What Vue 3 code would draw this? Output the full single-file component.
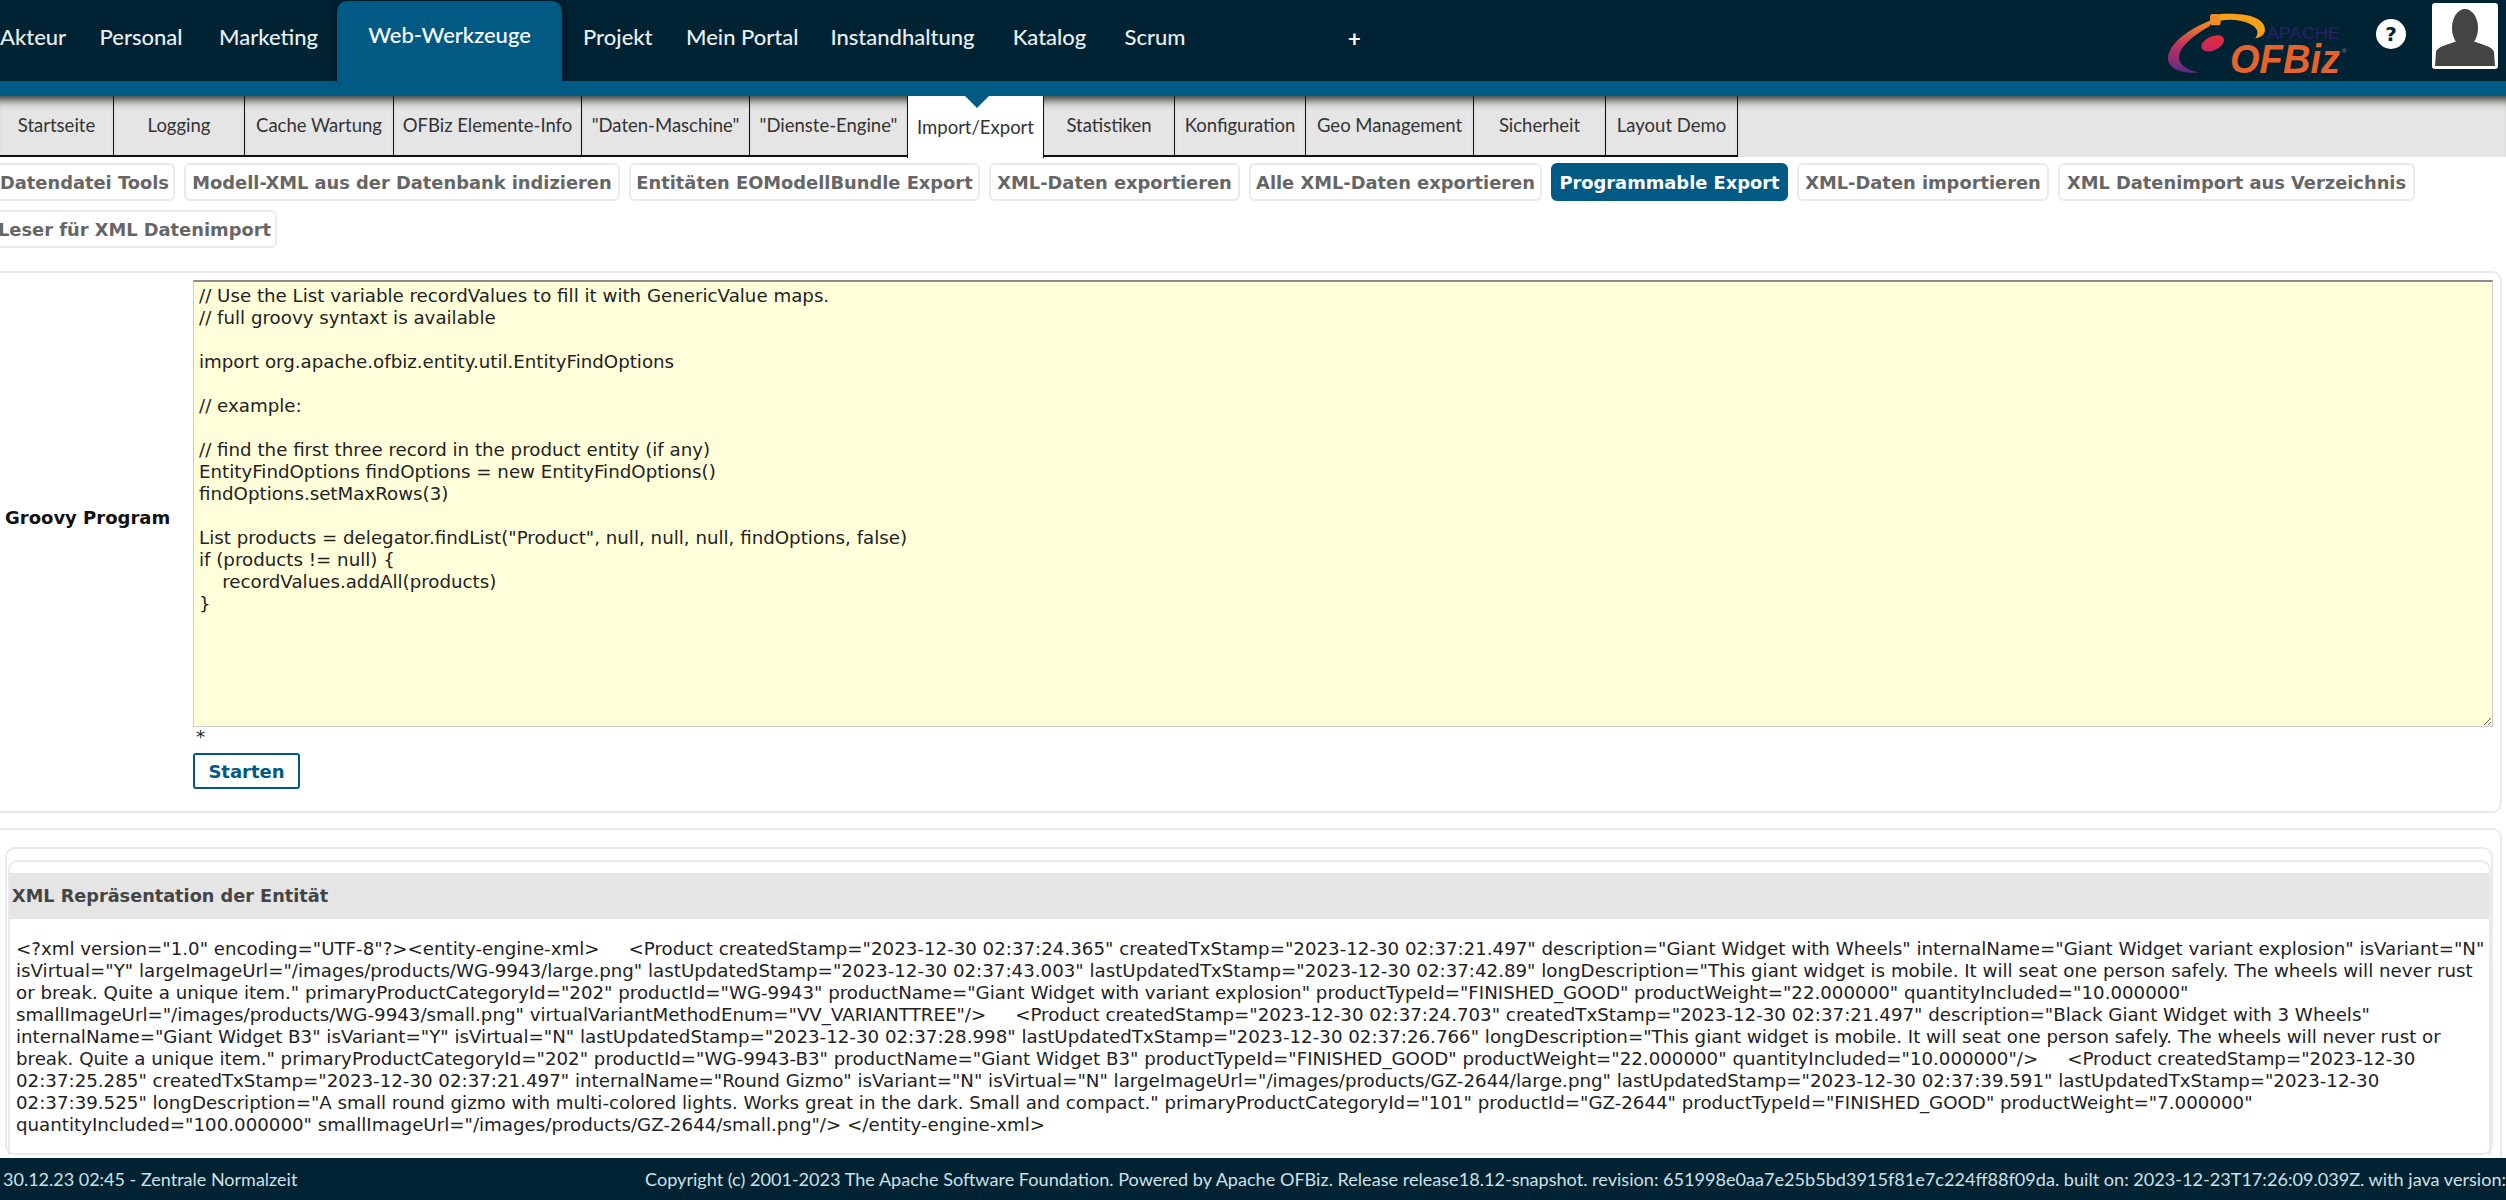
<script setup>
import { ref } from 'vue'

// top menu, widths measured off the screenshot
const menu = [
  { label: 'Akteur', w: 63 },
  { label: 'Personal', w: 84 },
  { label: 'Marketing', w: 97 },
  { label: 'Web-Werkzeuge', w: 225, active: true },
  { label: 'Projekt', w: 67 },
  { label: 'Mein Portal', w: 108 },
  { label: 'Instandhaltung', w: 145 },
  { label: 'Katalog', w: 77 },
  { label: 'Scrum', w: 62 }
]

const tabs = [
  { label: 'Startseite', w: 114 },
  { label: 'Logging', w: 131 },
  { label: 'Cache Wartung', w: 149 },
  { label: 'OFBiz Elemente-Info', w: 188 },
  { label: '"Daten-Maschine"', w: 168 },
  { label: '"Dienste-Engine"', w: 158 },
  { label: 'Import/Export', w: 137, active: true },
  { label: 'Statistiken', w: 131 },
  { label: 'Konfiguration', w: 131 },
  { label: 'Geo Management', w: 168 },
  { label: 'Sicherheit', w: 132 },
  { label: 'Layout Demo', w: 132 }
]

const buttons = [
  { label: 'Datendatei Tools', w: 185 },
  { label: 'Modell-XML aus der Datenbank indizieren', w: 436 },
  { label: 'Entitäten EOModellBundle Export', w: 351 },
  { label: 'XML-Daten exportieren', w: 251 },
  { label: 'Alle XML-Daten exportieren', w: 293 },
  { label: 'Programmable Export', w: 237, active: true },
  { label: 'XML-Daten importieren', w: 252 },
  { label: 'XML Datenimport aus Verzeichnis', w: 357 },
  { label: 'Leser für XML Datenimport', w: 287 }
]

const program = ref(`// Use the List variable recordValues to fill it with GenericValue maps.
// full groovy syntaxt is available

import org.apache.ofbiz.entity.util.EntityFindOptions

// example:

// find the first three record in the product entity (if any)
EntityFindOptions findOptions = new EntityFindOptions()
findOptions.setMaxRows(3)

List products = delegator.findList("Product", null, null, null, findOptions, false)
if (products != null) {
    recordValues.addAll(products)
}`)

const xmlLines = [
  '<?xml version="1.0" encoding="UTF-8"?><entity-engine-xml>     <Product createdStamp="2023-12-30 02:37:24.365" createdTxStamp="2023-12-30 02:37:21.497" description="Giant Widget with Wheels" internalName="Giant Widget variant explosion" isVariant="N"',
  'isVirtual="Y" largeImageUrl="/images/products/WG-9943/large.png" lastUpdatedStamp="2023-12-30 02:37:43.003" lastUpdatedTxStamp="2023-12-30 02:37:42.89" longDescription="This giant widget is mobile. It will seat one person safely. The wheels will never rust',
  'or break. Quite a unique item." primaryProductCategoryId="202" productId="WG-9943" productName="Giant Widget with variant explosion" productTypeId="FINISHED_GOOD" productWeight="22.000000" quantityIncluded="10.000000"',
  'smallImageUrl="/images/products/WG-9943/small.png" virtualVariantMethodEnum="VV_VARIANTTREE"/>     <Product createdStamp="2023-12-30 02:37:24.703" createdTxStamp="2023-12-30 02:37:21.497" description="Black Giant Widget with 3 Wheels"',
  'internalName="Giant Widget B3" isVariant="Y" isVirtual="N" lastUpdatedStamp="2023-12-30 02:37:28.998" lastUpdatedTxStamp="2023-12-30 02:37:26.766" longDescription="This giant widget is mobile. It will seat one person safely. The wheels will never rust or',
  'break. Quite a unique item." primaryProductCategoryId="202" productId="WG-9943-B3" productName="Giant Widget B3" productTypeId="FINISHED_GOOD" productWeight="22.000000" quantityIncluded="10.000000"/>     <Product createdStamp="2023-12-30',
  '02:37:25.285" createdTxStamp="2023-12-30 02:37:21.497" internalName="Round Gizmo" isVariant="N" isVirtual="N" largeImageUrl="/images/products/GZ-2644/large.png" lastUpdatedStamp="2023-12-30 02:37:39.591" lastUpdatedTxStamp="2023-12-30',
  '02:37:39.525" longDescription="A small round gizmo with multi-colored lights. Works great in the dark. Small and compact." primaryProductCategoryId="101" productId="GZ-2644" productTypeId="FINISHED_GOOD" productWeight="7.000000"',
  'quantityIncluded="100.000000" smallImageUrl="/images/products/GZ-2644/small.png"/> </entity-engine-xml>'
]
</script>

<template>
  <div class="page">
    <header class="header">
      <nav class="menu">
        <a v-for="m in menu" :key="m.label" class="menu-item" :class="{ active: m.active }" :style="{ width: m.w + 'px' }">{{ m.label }}</a>
        <a class="menu-plus">+</a>
      </nav>
      <div class="header-right">
        <svg class="logo" viewBox="0 0 600 210" width="200" height="70">
          <defs>
            <linearGradient id="swoosh" x1="0" y1="0" x2="0" y2="1">
              <stop offset="0" stop-color="#f7941d" />
              <stop offset="0.45" stop-color="#c2355f" />
              <stop offset="1" stop-color="#5b2a86" />
            </linearGradient>
            <linearGradient id="dot" x1="0" y1="1" x2="1" y2="0">
              <stop offset="0" stop-color="#c4256a" />
              <stop offset="1" stop-color="#e8302e" />
            </linearGradient>
          </defs>
          <path d="M150 38C90 61 25 106 24 151C24 181 60 198 120 194C82 186 52 171 58 141C64 111 110 76 150 54Z" fill="url(#swoosh)" />
          <rect x="150" y="18" width="32" height="34" rx="8" fill="#f28c28" />
          <path d="M180 18C240 14 315 21 315 66C315 81 300 88 285 92C298 76 300 51 240 38C220 34 200 34 180 38Z" fill="#f9a01b" />
          <ellipse cx="158" cy="106" rx="36" ry="21" transform="rotate(-24 158 106)" fill="url(#dot)" />
          <text x="320" y="94" class="logo-apache" textLength="220" lengthAdjust="spacingAndGlyphs">APACHE</text>
          <text x="210" y="194" class="logo-ofbiz" textLength="330" lengthAdjust="spacingAndGlyphs">OFBiz</text>
          <text x="546" y="136" class="logo-reg">®</text>
        </svg>
        <div class="help">?</div>
        <div class="avatar">
          <svg viewBox="0 0 66 66" width="66" height="66">
            <ellipse cx="33" cy="25" rx="13" ry="19" fill="#444" />
            <path d="M3 63L4 49C5 43 20 41 27 37H39C46 41 61 43 62 49L63 63Z" fill="#444" />
          </svg>
        </div>
      </div>
    </header>
    <div class="band"></div>

    <nav class="tabs">
      <a v-for="t in tabs" :key="t.label" class="tab" :class="{ active: t.active }" :style="{ width: t.w + 'px' }">{{ t.label }}</a>
      <span class="tabs-rest"></span>
    </nav>

    <main class="main">
      <div class="subnav">
        <a v-for="b in buttons" :key="b.label" class="subnav-btn" :class="{ active: b.active }" :style="{ width: b.w + 'px' }">{{ b.label }}</a>
      </div>

      <form class="card form-card" @submit.prevent>
        <label class="field-label">Groovy Program</label>
        <div class="field">
          <textarea v-model="program" class="program" spellcheck="false"></textarea>
          <span class="required">*</span>
          <button type="submit" class="run">Starten</button>
        </div>
      </form>

      <section class="card result-card">
        <div class="inner">
          <div class="inner2">
            <h3 class="result-title">XML Repräsentation der Entität</h3>
            <div class="xml">
              <div v-for="(line, i) in xmlLines" :key="i" class="xml-line">{{ line }}</div>
            </div>
          </div>
        </div>
      </section>
    </main>

    <footer class="footer">
      <span class="footer-left">30.12.23 02:45 - Zentrale Normalzeit</span>
      <span class="footer-right">Copyright (c) 2001-2023 The Apache Software Foundation. Powered by Apache OFBiz. Release release18.12-snapshot. revision: 651998e0aa7e25b5bd3915f81e7c224ff88f09da. built on: 2023-12-23T17:26:09.039Z. with java version:</span>
    </footer>
  </div>
</template>

<style>
html, body {
  margin: 0;
  overflow: hidden;
}
</style>

<style scoped>
* {
  box-sizing: border-box;
}
.page {
  width: 2506px;
  height: 1200px;
  display: flex;
  flex-direction: column;
  overflow: hidden;
  background: #fff;
  font-family: "DejaVu Sans", Verdana, sans-serif;
  font-size: 18.23px;
  color: #222;
}

/* header */
.header {
  height: 81px;
  flex: none;
  background: #002333;
  display: flex;
  justify-content: space-between;
}
.menu {
  display: flex;
  gap: 36px;
  font-family: Lato, sans-serif;
  font-size: 22px;
  font-weight: 500;
  color: #e8f0f4;
}
.menu-item {
  line-height: 74px;
  text-align: center;
  white-space: nowrap;
}
.menu-item.active {
  margin: 1px -15px 0;
  line-height: 68px;
  background: #005a84;
  border-radius: 10px 10px 0 0;
  box-shadow: 0 0 12px rgba(0, 0, 0, 0.5);
  color: #fff;
}
.menu-plus {
  margin-left: 126px;
  line-height: 78px;
  font-weight: 700;
  color: #fff;
}
.header-right {
  display: flex;
  align-items: flex-start;
  padding: 3px 8px 0 0;
}
.logo {
  margin: 5px 16px 0 0;
  overflow: visible;
}
.logo-apache {
  font-family: "Liberation Sans", sans-serif;
  font-size: 50px;
  fill: #2a2165;
}
.logo-ofbiz {
  font-family: "Liberation Sans", sans-serif;
  font-size: 124px;
  font-weight: 700;
  font-style: italic;
  fill: #e8622c;
}
.logo-reg {
  font-family: "Liberation Sans", sans-serif;
  font-size: 18px;
  fill: #999;
}
.help {
  width: 30px;
  height: 30px;
  margin: 16px 26px 0 0;
  border-radius: 50%;
  background: #fff;
  color: #002333;
  font-family: "DejaVu Sans", sans-serif;
  font-size: 20px;
  font-weight: 700;
  line-height: 30px;
  text-align: center;
}
.avatar {
  width: 66px;
  height: 66px;
  background: #fff;
  border-radius: 3px;
  overflow: hidden;
}
.band {
  height: 15px;
  flex: none;
  background: #005a84;
}

/* tabs */
.tabs {
  height: 61px;
  flex: none;
  display: flex;
  background: #e5e5e5;
  font-family: Lato, sans-serif;
  font-size: 18.5px;
  color: #333;
}
.tab {
  position: relative;
  flex: none;
  height: 61px;
  border-right: 1px solid #111;
  border-bottom: 2px solid #111;
  line-height: 58px;
  text-align: center;
  white-space: nowrap;
  box-shadow: inset 0 12px 10px -8px #333;
}
.tab.active {
  height: 62px;
  margin-left: -1px;
  border-left: 1px solid #111;
  border-bottom: none;
  background: #fff;
  line-height: 62px;
  box-shadow: none;
  z-index: 1;
}
/* little arrow hanging from the blue band */
.tab.active::before {
  content: "";
  position: absolute;
  top: 0;
  left: 57px;
  border-left: 12px solid transparent;
  border-right: 12px solid transparent;
  border-top: 12px solid #005a84;
}
.tabs-rest {
  flex: 1;
  box-shadow: inset 0 12px 10px -8px #333;
}

/* content */
.main {
  flex: 1;
  min-height: 0;
  overflow: hidden;
  margin-left: -10px;
}
.subnav {
  display: flex;
  flex-wrap: wrap;
  gap: 9px;
  padding-top: 6px;
}
.subnav-btn {
  height: 38px;
  border: 2px solid #eaeaea;
  border-radius: 6px;
  font-weight: 700;
  font-size: 17.85px;
  line-height: 36px;
  text-align: center;
  white-space: nowrap;
  color: #666;
}
/* first and last button start at the page's left edge */
.subnav-btn:first-child,
.subnav-btn:last-child {
  padding-right: 4px;
  text-align: right;
}
.subnav-btn.active {
  background: #005a84;
  border-color: #005a84;
  color: #fff;
}
.card {
  width: 2512px;
  border: 2px solid #eaeaea;
  border-radius: 10px;
}
.form-card {
  height: 542px;
  margin-top: 23px;
  padding: 7px 10px 0 8px;
  display: flex;
  align-items: flex-start;
}
.field-label {
  width: 193px;
  padding: 227px 0 0 5px;
  font-size: 18px;
  font-weight: 700;
  color: #111;
}
.field {
  flex: 1;
  min-width: 0;
  display: flex;
  flex-direction: column;
  align-items: flex-start;
}
.program {
  width: 2300px;
  height: 447px;
  display: block;
  padding: 3px 5px;
  border: 1px solid #ccc;
  border-top: 2px solid #8a8a8a;
  background: #ffffd9;
  font: inherit;
  line-height: 22px;
  color: #222;
  outline: none;
}
.required {
  height: 26px;
  padding-left: 3px;
  line-height: 20px;
}
.run {
  width: 107px;
  height: 36px;
  padding: 0;
  border: 2px solid #005a84;
  border-radius: 3px;
  background: #fff;
  font: inherit;
  font-size: 18px;
  font-weight: 700;
  color: #005a84;
}
.result-card {
  margin-top: 15px;
  height: 400px;
  padding: 17px 7px 0 13px;
}
.inner {
  height: 308px;
  border: 2px solid #eaeaea;
  border-radius: 10px;
  padding: 11px 0 0 0;
}
.inner2 {
  height: 295px;
  margin-left: 1px;
  border: 2px solid #eaeaea;
  border-bottom: none;
  border-radius: 10px 10px 0 0;
  padding-top: 11px;
}
.result-title {
  height: 46px;
  margin: 0;
  padding-left: 2px;
  background: #e5e5e5;
  font-size: 17.7px;
  line-height: 46px;
  font-weight: 700;
  color: #444;
}
.xml {
  padding: 19px 0 0 6px;
  line-height: 22px;
}
.xml-line {
  white-space: pre;
}

/* footer */
.footer {
  height: 42px;
  flex: none;
  display: flex;
  align-items: center;
  padding-left: 3px;
  background: #002333;
  font-family: Lato, sans-serif;
  font-size: 18px;
  color: #cfe0e8;
  white-space: nowrap;
  overflow: hidden;
}
.footer-left {
  flex: 0 0 642px;
}
.footer-right {
  font-size: 18.1px;
}
</style>
